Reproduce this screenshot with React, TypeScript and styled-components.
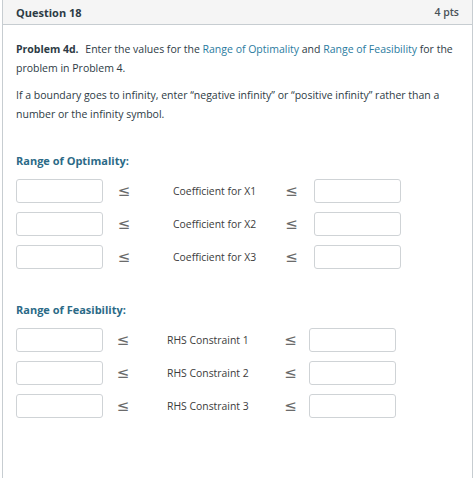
import styled, { createGlobalStyle } from 'styled-components'

const GlobalStyle = createGlobalStyle`
  html, body { margin: 0; padding: 0; background: #fff; }
  body { font-family: "Open Sans", "Liberation Sans", sans-serif; color: #2d3b45; }
`

const Card = styled.div`
  margin-left: 2px;
  width: 469px;
  min-height: 478px;
  border-left: 1px solid #c7cdd1;
  border-right: 1px solid #c7cdd1;
  background: #fff;
`

const Header = styled.div`
  height: 24px;
  display: flex;
  align-items: center;
  justify-content: space-between;
  padding: 0 13px 0 13px;
  background: #f5f5f5;
  border-bottom: 1px solid #c7cdd1;
`

const Title = styled.h2`
  margin: 0;
  font-size: 11px;
  font-weight: 700;
  color: #2d3b45;
`

const Points = styled.span`
  font-size: 10.5px;
  font-weight: 600;
  color: #4a5258;
`

const Body = styled.div`
  padding: 15px 13px 0 13px;
`

const Para = styled.p`
  margin: 0 0 8px;
  font-size: 10.5px;
  line-height: 19px;
  color: #2d3b45;
`

const Strong = styled.strong`
  font-weight: 700;
  margin-right: 4px;
`

const Link = styled.span`
  color: #2a7ba0;
`

const SectionTitle = styled.h3<{ $top: number }>`
  margin: ${(p) => p.$top}px 0 9px;
  font-size: 11px;
  line-height: 19px;
  font-weight: 700;
  color: #2b6a87;
`

const Rows = styled.div<{ $cols: string }>`
  display: grid;
  grid-template-columns: ${(p) => p.$cols};
  row-gap: 9px;
  align-items: center;
`

const Box = styled.input<{ $end?: boolean }>`
  width: 87px;
  height: 24px;
  box-sizing: border-box;
  margin: 0;
  padding: 0 6px;
  border: 1px solid #cfd3d6;
  border-radius: 3px;
  background: #fff;
  justify-self: ${(p) => (p.$end ? 'end' : 'start')};
  &:focus { outline: none; }
`

const Rel = styled.span`
  text-align: center;
  font-family: "DejaVu Sans", sans-serif;
  font-size: 15px;
  line-height: 24px;
  color: #6b6b6b;
`

const Label = styled.span<{ $indent: number }>`
  padding-left: ${(p) => p.$indent}px;
  font-size: 10.4px;
  color: #3b3b3b;
`

type Section = { title: string; top: number; cols: string; indent: number; labels: string[] }

const sections: Section[] = [
  { title: 'Range of Optimality:', top: 27, cols: '87px 42px 135px 23px 98px', indent: 28, labels: ['Coefficient for X1', 'Coefficient for X2', 'Coefficient for X3'] },
  { title: 'Range of Feasibility:', top: 31, cols: '87px 40px 136px 23px 94px', indent: 24, labels: ['RHS Constraint 1', 'RHS Constraint 2', 'RHS Constraint 3'] },
]

export default function App() {
  return <>
    <GlobalStyle />
    <Card>
      <Header>
        <Title>Question 18</Title>
        <Points>4 pts</Points>
      </Header>
      <Body>
        <Para>
          <Strong>Problem 4d.</Strong> Enter the values for the <Link>Range of Optimality</Link> and <Link>Range of Feasibility</Link> for the problem in Problem 4.
        </Para>
        <Para>If a boundary goes to infinity, enter “negative infinity” or “positive infinity” rather than a number or the infinity symbol.</Para>
        {sections.map((s) => (
          <div key={s.title}>
            <SectionTitle $top={s.top}>{s.title}</SectionTitle>
            <Rows $cols={s.cols}>
              {s.labels.map((l) => [
                <Box key={l + 'a'} />,
                <Rel key={l + 'b'}>≤</Rel>,
                <Label key={l + 'c'} $indent={s.indent}>{l}</Label>,
                <Rel key={l + 'd'}>≤</Rel>,
                <Box key={l + 'e'} $end />,
              ])}
            </Rows>
          </div>
        ))}
      </Body>
    </Card>
  </>
}
